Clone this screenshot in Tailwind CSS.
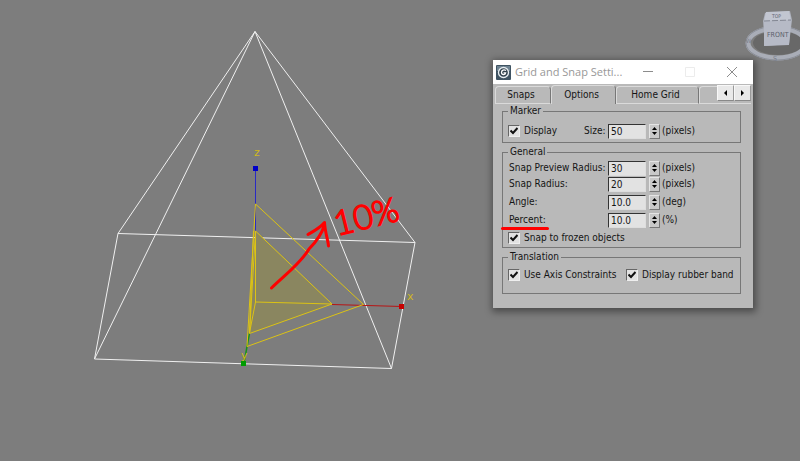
<!DOCTYPE html>
<html lang="en">

<head>
  <meta charset="UTF-8">
  <meta name="viewport" content="width=device-width, initial-scale=1.0">
  <title>Grid and Snap Settings</title>
  <script src="https://cdn.jsdelivr.net/npm/@tailwindcss/browser@4"></script>
</head>

<body class="bg-[#7d7d7d] text-[#151515] font-['DejaVu_Sans_Condensed',sans-serif]">
  <main class="relative min-h-screen overflow-hidden">

    <!-- Viewport: pyramid wireframe, scale gizmo, pen notes -->
    <svg class="absolute left-0 top-0" width="450" height="400" viewBox="0 0 450 400" fill="none">
      <g stroke="#f0f0f0" stroke-width="1">
        <path d="M118 233.500L415 242.500L391.500 368.500L94.500 359Z" />
        <path d="M255 31.500L118 233.500M255 31.500L94.500 359M255 31.500L391.500 368.500M255 31.500L415 242.500" />
      </g>
      <path d="M255.500 168V302" stroke="#2a2ac4" />
      <path d="M332 304.500L402 306.500" stroke="#b81414" />
      <path d="M249.500 333L244 363" stroke="#1a901a" stroke-width="1.500" />
      <path d="M255.500 231L332 304L249.500 333.500Z" fill="#8a8660" />
      <g stroke="#dcc314" stroke-width="1">
        <path d="M255.500 204L363.500 304.500L247 346.500Z" />
        <path d="M255.500 231L332 304L249.500 333.500Z" />
        <path d="M255.500 231V302L332 304M255.500 302L249.500 333" />
        <path d="M253.500 231L249.500 333" />
      </g>
      <rect x="253" y="166" width="5" height="5" fill="#0000c8" />
      <rect x="399" y="304" width="5" height="5" fill="#c80000" />
      <rect x="241" y="361" width="5" height="5" fill="#009c00" />
      <g fill="#cfb81c" font-family="DejaVu Sans" font-size="11">
        <text x="254" y="156">z</text>
        <text x="407" y="300">x</text>
        <text x="241" y="359">y</text>
      </g>
      <path d="M271.500 288C286 274 301 263 309 249C316 242 321 236 324.500 225M308 234.500C314 231 320 228 324.500 222.500C325 232 328 240 328.500 246"
        stroke="#f00" stroke-width="3" stroke-linecap="round" stroke-linejoin="round" />
      <text transform="translate(337 236) rotate(-14)" font-family="Lato" font-weight="300" font-size="34"
        fill="#f00" stroke="#f00" stroke-width="1.500">10%</text>
    </svg>

    <!-- View cube -->
    <svg class="absolute right-0 top-0" width="60" height="66" viewBox="0 0 60 66" fill="none">
      <ellipse cx="38" cy="43" rx="25" ry="12" fill="#686868" />
      <ellipse cx="37" cy="43" rx="29" ry="15" stroke="#a9adb7" stroke-width="5" />
      <ellipse cx="37" cy="43" rx="31" ry="17" stroke="#8b8f99" stroke-width="1" />
      <path d="M25 13L50 11L52 20L49 44L25 46L23 21Z" fill="#aeb2bd" />
      <path d="M24 21L51 20L49 45L24 46Z" fill="#b6bac6" />
      <path d="M26 12L49 11L51 20L24 21Z" fill="#c2c6d1" />
      <path d="M24 21L51 20" stroke="#838793" stroke-dasharray="6 2" />
      <g fill="#5c606c" font-family="DejaVu Sans Condensed">
        <text x="32" y="18" font-size="5">TOP</text>
        <text x="27" y="37" font-size="7">FRONT</text>
        <text x="33" y="61" font-size="7" fill="#7b7f8b">S</text>
        <text x="6" y="43" font-size="6" fill="#7b7f8b">W</text>
      </g>
    </svg>

    <!-- Settings dialog -->
    <section class="absolute left-[493px] top-[60px] w-[260px] bg-[#b9b9b9] pb-[14px] text-[10px] leading-3 shadow-[1px_2px_7px_2px_rgba(0,0,0,0.4)]">
      <header class="flex h-6 items-center bg-white pl-[3px] pr-4">
        <svg class="shrink-0" width="15" height="15" viewBox="0 0 15 15" fill="none">
          <rect width="15" height="15" rx="1" fill="#3f5362" />
          <rect x="1" y="1" width="13" height="5" fill="#6d8291" />
          <circle cx="7.500" cy="7.500" r="5" fill="#30404c" stroke="#e8eef2" stroke-width="1.300" />
          <path d="M10 5.500C8 4.300 5.500 5 5.500 7.500C5.500 10 9.500 10.300 9.700 7.800H7.500" stroke="#fff" stroke-width="1.300" />
        </svg>
        <h1 class="ml-1 flex-1 whitespace-nowrap font-['Open_Sans',sans-serif] text-[11px] leading-4 text-[#989898]">Grid and Snap Setti...</h1>
        <div class="flex items-center gap-8">
          <button type="button" aria-label="Minimize">
            <svg width="10" height="10" viewBox="0 0 10 10" stroke="#8c8c8c"><path d="M0 4.500H10" /></svg>
          </button>
          <button type="button" aria-label="Maximize">
            <svg width="10" height="10" viewBox="0 0 10 10" fill="none" stroke="#ececec"><path d="M.5 .5H9.500V9.500H.5Z" /></svg>
          </button>
          <button type="button" aria-label="Close">
            <svg width="10" height="10" viewBox="0 0 10 10" stroke="#8c8c8c"><path d="M0 0L10 10M10 0L0 10" /></svg>
          </button>
        </div>
      </header>

      <nav class="flex h-5 items-end pl-[2px] pr-[2px]">
        <button type="button" class="h-[18px] w-14 shrink-0 rounded-t-sm border-b border-l border-r border-t border-b-[#dadada] border-l-[#dadada] border-r-[#777] border-t-[#dadada] pr-1">Snaps</button>
        <button type="button" class="h-[19px] w-[65px] shrink-0 rounded-t-sm border-l border-r border-t border-l-[#dadada] border-r-[#777] border-t-[#dadada] pr-1">Options</button>
        <button type="button" class="h-[18px] w-[83px] shrink-0 rounded-t-sm border-b border-l border-r border-t border-b-[#dadada] border-l-[#dadada] border-r-[#777] border-t-[#dadada] pr-1">Home Grid</button>
        <div class="h-[18px] flex-1 rounded-tl-sm border-b border-l border-t border-[#dadada]"></div>
        <div class="flex h-[19px] border-b border-[#dadada] pb-[2px]">
          <button type="button" aria-label="Previous tab" class="flex w-[17px] items-center justify-center border border-l-[#f8f8f8] border-t-[#f8f8f8] border-b-[#888] border-r-[#999] bg-[#e9e9e9]">
            <svg width="3" height="6" viewBox="0 0 3 6"><path d="M3 0V6L0 3Z" /></svg>
          </button>
          <button type="button" aria-label="Next tab" class="flex w-[17px] items-center justify-center border border-l-[#f8f8f8] border-t-[#f8f8f8] border-b-[#888] border-r-[#999] bg-[#e9e9e9]">
            <svg width="3" height="6" viewBox="0 0 3 6"><path d="M0 0V6L3 3Z" /></svg>
          </button>
        </div>
      </nav>

      <form class="flex flex-col gap-[3px] pl-[9px] pr-3 pt-[1px]">
        <fieldset class="border border-[#777] px-[5px] pb-[3px]">
          <legend class="px-[2px]">Marker</legend>
          <div class="mt-[6px] flex h-4 items-center">
            <div class="relative flex w-[76px] items-center gap-1">
              <input id="display" type="checkbox" checked class="peer size-3 appearance-none border border-b-[#eee] border-l-[#666] border-r-[#eee] border-t-[#666] bg-[#e2e2e2]">
              <svg class="pointer-events-none absolute left-[2px] hidden peer-checked:block" width="8" height="8" viewBox="0 0 8 8" fill="none" stroke="#111" stroke-width="2"><path d="M.5 3.500L3 6L7.500 1" /></svg>
              <label for="display">Display</label>
            </div>
            <label for="size" class="w-6 whitespace-nowrap">Size:</label>
            <input id="size" type="text" value="50" class="h-[15px] w-[38px] border border-b-[#ddd] border-l-[#333] border-r-[#ddd] border-t-[#333] bg-[#e2e2e2] pl-[2px]">
            <div class="ml-[3px] flex h-[15px] w-[11px] flex-col items-center justify-evenly border border-b-[#777] border-l-[#e4e4e4] border-r-[#777] border-t-[#e4e4e4] bg-[#c8c8c8]">
              <button type="button" aria-label="Increase size"><svg class="block" width="5" height="3" viewBox="0 0 5 3"><path d="M0 3H5L2.500 0Z" /></svg></button>
              <button type="button" aria-label="Decrease size"><svg class="block" width="5" height="3" viewBox="0 0 5 3"><path d="M0 0H5L2.500 3Z" /></svg></button>
            </div>
            <span class="ml-[2px]">(pixels)</span>
          </div>
        </fieldset>

        <fieldset class="border border-[#777] px-[5px] pb-[3px]">
          <legend class="px-[2px]">General</legend>
          <div class="mt-[2px] flex h-4 items-center">
            <label for="preview" class="w-[100px] whitespace-nowrap pl-[1px]">Snap Preview Radius:</label>
            <input id="preview" type="text" value="30" class="h-[15px] w-[38px] border border-b-[#ddd] border-l-[#333] border-r-[#ddd] border-t-[#333] bg-[#e2e2e2] pl-[2px]">
            <div class="ml-[3px] flex h-[15px] w-[11px] flex-col items-center justify-evenly border border-b-[#777] border-l-[#e4e4e4] border-r-[#777] border-t-[#e4e4e4] bg-[#c8c8c8]">
              <button type="button" aria-label="Increase preview radius"><svg class="block" width="5" height="3" viewBox="0 0 5 3"><path d="M0 3H5L2.500 0Z" /></svg></button>
              <button type="button" aria-label="Decrease preview radius"><svg class="block" width="5" height="3" viewBox="0 0 5 3"><path d="M0 0H5L2.500 3Z" /></svg></button>
            </div>
            <span class="ml-[2px]">(pixels)</span>
          </div>
          <div class="flex h-4 items-center">
            <label for="radius" class="w-[100px] whitespace-nowrap pl-[1px]">Snap Radius:</label>
            <input id="radius" type="text" value="20" class="h-[15px] w-[38px] border border-b-[#ddd] border-l-[#333] border-r-[#ddd] border-t-[#333] bg-[#e2e2e2] pl-[2px]">
            <div class="ml-[3px] flex h-[15px] w-[11px] flex-col items-center justify-evenly border border-b-[#777] border-l-[#e4e4e4] border-r-[#777] border-t-[#e4e4e4] bg-[#c8c8c8]">
              <button type="button" aria-label="Increase radius"><svg class="block" width="5" height="3" viewBox="0 0 5 3"><path d="M0 3H5L2.500 0Z" /></svg></button>
              <button type="button" aria-label="Decrease radius"><svg class="block" width="5" height="3" viewBox="0 0 5 3"><path d="M0 0H5L2.500 3Z" /></svg></button>
            </div>
            <span class="ml-[2px]">(pixels)</span>
          </div>
          <div class="mt-[2px] flex h-4 items-center">
            <label for="angle" class="w-[100px] whitespace-nowrap pl-[1px]">Angle:</label>
            <input id="angle" type="text" value="10.0" class="h-[15px] w-[38px] border border-b-[#ddd] border-l-[#333] border-r-[#ddd] border-t-[#333] bg-[#e2e2e2] pl-[2px]">
            <div class="ml-[3px] flex h-[15px] w-[11px] flex-col items-center justify-evenly border border-b-[#777] border-l-[#e4e4e4] border-r-[#777] border-t-[#e4e4e4] bg-[#c8c8c8]">
              <button type="button" aria-label="Increase angle"><svg class="block" width="5" height="3" viewBox="0 0 5 3"><path d="M0 3H5L2.500 0Z" /></svg></button>
              <button type="button" aria-label="Decrease angle"><svg class="block" width="5" height="3" viewBox="0 0 5 3"><path d="M0 0H5L2.500 3Z" /></svg></button>
            </div>
            <span class="ml-[2px]">(deg)</span>
          </div>
          <div class="relative mt-[2px] flex h-4 items-center">
            <label for="percent" class="w-[100px] whitespace-nowrap pl-[1px]">Percent:</label>
            <!-- pen underline -->
            <span class="absolute -bottom-[2px] -left-[7px] h-[3px] w-12 rounded-full bg-[#f00]"></span>
            <input id="percent" type="text" value="10.0" class="h-[15px] w-[38px] border border-b-[#ddd] border-l-[#333] border-r-[#ddd] border-t-[#333] bg-[#e2e2e2] pl-[2px]">
            <div class="ml-[3px] flex h-[15px] w-[11px] flex-col items-center justify-evenly border border-b-[#777] border-l-[#e4e4e4] border-r-[#777] border-t-[#e4e4e4] bg-[#c8c8c8]">
              <button type="button" aria-label="Increase percent"><svg class="block" width="5" height="3" viewBox="0 0 5 3"><path d="M0 3H5L2.500 0Z" /></svg></button>
              <button type="button" aria-label="Decrease percent"><svg class="block" width="5" height="3" viewBox="0 0 5 3"><path d="M0 0H5L2.500 3Z" /></svg></button>
            </div>
            <span class="ml-[2px]">(%)</span>
          </div>
          <div class="relative mt-1 flex items-center gap-1">
            <input id="frozen" type="checkbox" checked class="peer size-3 appearance-none border border-b-[#eee] border-l-[#666] border-r-[#eee] border-t-[#666] bg-[#e2e2e2]">
            <svg class="pointer-events-none absolute left-[2px] hidden peer-checked:block" width="8" height="8" viewBox="0 0 8 8" fill="none" stroke="#111" stroke-width="2"><path d="M.5 3.500L3 6L7.500 1" /></svg>
            <label for="frozen">Snap to frozen objects</label>
          </div>
        </fieldset>

        <fieldset class="border border-[#777] px-[5px] pb-3">
          <legend class="px-[2px]">Translation</legend>
          <div class="mt-[6px] flex">
            <div class="relative flex w-[118px] items-center gap-1">
              <input id="axis" type="checkbox" checked class="peer size-3 appearance-none border border-b-[#eee] border-l-[#666] border-r-[#eee] border-t-[#666] bg-[#e2e2e2]">
              <svg class="pointer-events-none absolute left-[2px] hidden peer-checked:block" width="8" height="8" viewBox="0 0 8 8" fill="none" stroke="#111" stroke-width="2"><path d="M.5 3.500L3 6L7.500 1" /></svg>
              <label for="axis" class="whitespace-nowrap">Use Axis Constraints</label>
            </div>
            <div class="relative flex items-center gap-1">
              <input id="rubber" type="checkbox" checked class="peer size-3 appearance-none border border-b-[#eee] border-l-[#666] border-r-[#eee] border-t-[#666] bg-[#e2e2e2]">
              <svg class="pointer-events-none absolute left-[2px] hidden peer-checked:block" width="8" height="8" viewBox="0 0 8 8" fill="none" stroke="#111" stroke-width="2"><path d="M.5 3.500L3 6L7.500 1" /></svg>
              <label for="rubber" class="whitespace-nowrap">Display rubber band</label>
            </div>
          </div>
        </fieldset>
      </form>
    </section>
  </main>
</body>

</html>
